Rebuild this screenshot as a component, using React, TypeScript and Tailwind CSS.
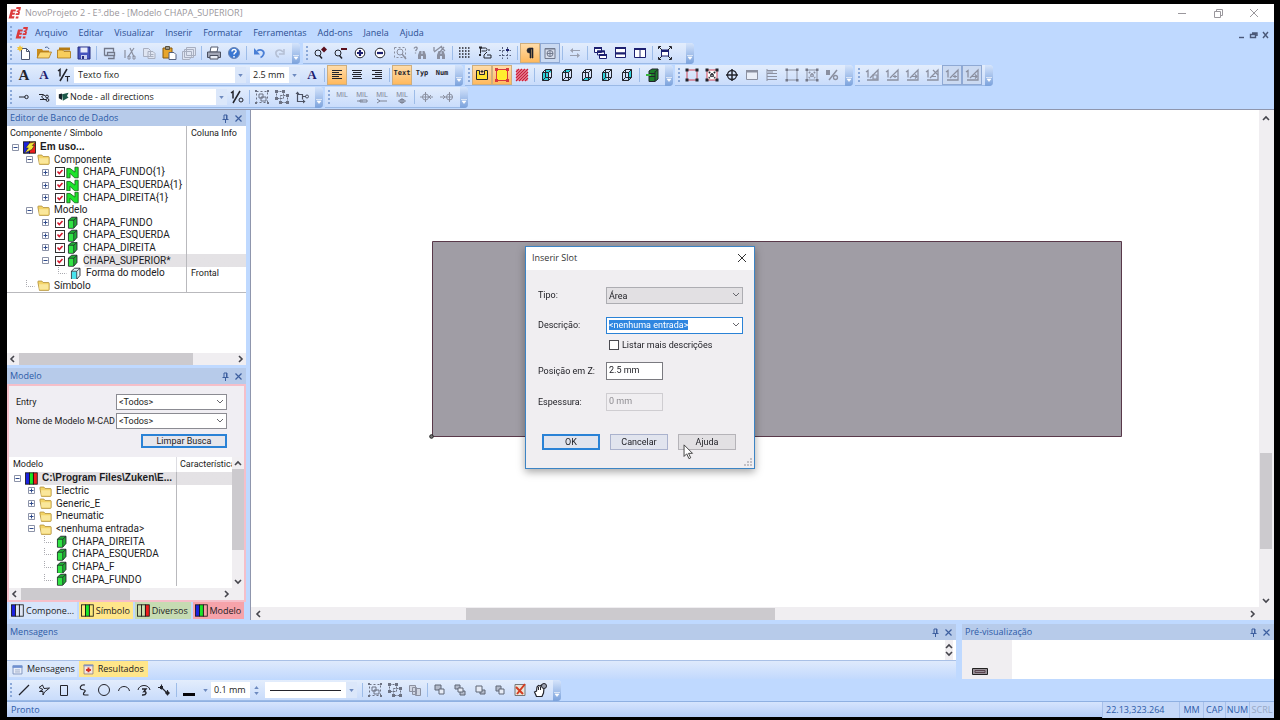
import { useEffect, useRef } from "react";
import type { ReactNode } from "react";

const G = "#8b90a0";
const K = "#23242c";
const N = "#1d2070";

const cube = (front: string, side: string) => (
  <>
    <path d="M3 5l4-3.500h6.500v9l-4 4.500H3z" fill={side} stroke={K} strokeWidth="1.100" />
    <path d="M3.500 5.500h6v9h-6z" fill={front} />
    <path d="M3 5.200h6.500v9.500M9.500 5.200l4-3.500" stroke={K} strokeWidth=".9" />
  </>
);

const wire = (face: string) => (
  <>
    <path d={face} fill="#2fd3dc" />
    <path d="M3.500 5.500h6v8h-6zM6.500 2.500h6v8h-6zM3.500 5.500l3-3M9.500 5.500l3-3M3.500 13.500l3-3M9.500 13.500l3-3" stroke={K} fill="none" />
  </>
);

const corners = (c: string) => (
  <path d="M1 1h3v3H1zM12 1h3v3h-3zM1 12h3v3H1zM12 12h3v3h-3z" fill={c} />
);

const ratio = (extra: string) => (
  <>
    <path d="M2 5l2-1.500v7M6 11l8-8v10H3" stroke={G} strokeWidth="1.300" fill="none" />
    <path d={extra} stroke={G} strokeWidth="1.200" fill="none" />
  </>
);

const layers = (a: string, b: string) => (
  <>
    <path d={a} fill="#b3bac9" stroke="#5f6676" />
    <path d={b} fill="#e6ebf5" stroke="#5f6676" />
  </>
);

const group = (c: string) => (
  <>
    <path d="M2.500 2.500h11v11h-11z" stroke={c} strokeDasharray="2 2" fill="none" />
    <path d="M5 5h4v4H5zM7 8h5v4H7z" stroke={c} fill="none" />
    <path d="M1 1h2v2H1zM13 1h2v2h-2zM1 13h2v2H1zM13 13h2v2h-2z" fill={c} />
  </>
);

const ungroup = (c: string) => (
  <>
    <path d="M2.500 2.500h7v7h-7zM6.500 6.500h7v7h-7z" stroke={c} strokeDasharray="2 1" fill="none" />
    <path d="M1 1h3v3H1zM8 1h3v3H8zM1 8h3v3H1zM12 5h3v3h-3zM5 12h3v3H5zM12 12h3v3h-3z" fill={c} />
  </>
);

const bars = (colors: [string, string, string]) => (
  <>
    {colors.map((c, i) => (
      <rect key={i} x={0.7 + i * 4.8} y="1" width="4.800" height="14" fill={c} stroke="#111" />
    ))}
  </>
);

const icons: Record<string, ReactNode> = {
  logo: (
    <>
      <path d="M4 4.500h5l-.6 2H6l-.3 1.300h2.400l-.6 2H5.200l-.3 1.400h2.600l-.6 2.300H1.600z" fill="#dc3a3c" />
      <path d="M9.500 2H14l-.6 3.200-1.200.9.8 1-.8 2.900H8.500l.4-1.700h1.900l.3-1.200H9.600l.3-1.500h1.400l.3-1.500H9.100zM9 11.500h2.600l-.4 2H8.600z" fill="#dc3a3c" />
    </>
  ),
  new: (
    <>
      <path d="M5.500 3.500h5l3 3v8h-8z" fill="#fff" stroke="#4a5570" />
      <path d="M10.500 3.500v3h3" stroke="#4a5570" fill="none" />
      <path d="M4 0l1 2 2-.5-1 2 1 1.500-2 0-1 2-1-2-2 0 1-1.500L1 2l2 0z" fill="#f2c43a" />
    </>
  ),
  open: (
    <>
      <path d="M1 4h5l1 1.500h6V13H1z" fill="#c98c1c" />
      <path d="M4 7h11.500L13 13H1z" fill="#fbd874" stroke="#a56d10" strokeWidth=".7" />
      <path d="M9 2.500c2-1 3.500 0 4 1.500" stroke="#47608f" fill="none" />
    </>
  ),
  folder2: (
    <>
      <path d="M3 2.500h11v3H3z" fill="#b67c14" />
      <path d="M1.500 5h5l1.500 1.500h6.500V13h-13z" fill="#f8cd5c" stroke="#a9740f" strokeWidth=".8" />
    </>
  ),
  save: (
    <>
      <path d="M2 2h12v12H2z" fill="#4553bd" stroke="#272f80" />
      <path d="M4.500 2.500h7v5h-7z" fill="#e8ecfb" />
      <path d="M5 10h6v4H5z" fill="#c9cfee" />
      <path d="M6 11h2v3H6z" fill="#272f80" />
    </>
  ),
  plug: (
    <path d="M3.500 10.500v-7h9v3M6.500 7.500h7v3h-7zM3.500 10.500h3M7 13.500h6v-3" stroke="#727889" strokeWidth="1.300" fill="none" />
  ),
  cut: (
    <>
      <path d="M4 5v8M7 12l6-9M9 3l4 9" stroke={G} strokeWidth="1.200" />
      <path d="M7 11h2v3H7zM12 11h2v3h-2z" fill="none" stroke={G} />
    </>
  ),
  copy: <path d="M2.500 3.500h5l2 2v6h-7zM7 6.500h5l2 2v5H7zM8.500 9.500h4M8.500 11.500h4" fill="#dfe5f2" stroke="#a8afc0" />,
  paste: (
    <>
      <path d="M2 3h9v10H2z" fill="#e7a52b" stroke="#87590c" />
      <path d="M4.500 1.500h4v3h-4z" fill="#9a968a" stroke="#59523f" />
      <path d="M8 7.500h5l2 2v5H8z" fill="#fff" stroke="#54617f" />
    </>
  ),
  copies: <path d="M5.500 2.500h9v8h-9zM3.500 4.500h9v8h-9zM1.500 6.500h9v5l-2 3h-7z" fill="#dfe5f2" stroke="#a8afc0" />,
  print: (
    <>
      <path d="M5 2h7l-1 5H4z" fill="#fff" stroke="#555c70" />
      <path d="M1.500 7h13v5.500h-13z" fill="#a2a7b7" stroke="#4a5060" />
      <path d="M4 10.500h8V14H4z" fill="#e9edf6" stroke="#4a5060" />
    </>
  ),
  help: (
    <>
      <circle cx="8" cy="8" r="5.500" fill="#3a77d2" stroke="#6b86b4" />
      <path d="M6 6.500c0-3 4.500-2.500 4 0-.3 1.300-2 1.300-2 3M8 11v1.500" stroke="#fff" strokeWidth="1.500" fill="none" />
    </>
  ),
  undo: (
    <>
      <path d="M6 6c4-2.500 8 0 6.500 3.500-.6 1.500-1.500 2.500-3 3" stroke="#4a7fd6" strokeWidth="1.800" fill="none" />
      <path d="M3 3v6.500h6z" fill="#4a7fd6" />
    </>
  ),
  redo: <path d="M12 7c-3-4-8-1.500-7 2 .5 2 2 3 3 3M13 4v5H8" stroke="#b4bfd4" strokeWidth="1.500" fill="none" />,
  zoomin: (
    <>
      <circle cx="6" cy="8" r="3" stroke={K} fill="none" />
      <path d="M7.500 10.500L10 13.500" stroke={K} strokeWidth="1.500" />
      <path d="M12 1.500l3 3-3 3-3-3z" fill="#5b0f1c" />
    </>
  ),
  zoomout: (
    <>
      <circle cx="6" cy="8" r="3" stroke={K} fill="none" />
      <path d="M7.500 10.500L10 13.500" stroke={K} strokeWidth="1.500" />
      <path d="M9 3h6v2H9z" fill="#5b0f1c" />
    </>
  ),
  cplus: (
    <>
      <circle cx="8" cy="8" r="4.800" stroke={K} fill="#fff" />
      <path d="M8 5v6M5 8h6" stroke={N} strokeWidth="2.200" />
    </>
  ),
  cminus: (
    <>
      <circle cx="8" cy="8" r="4.800" stroke={K} fill="#fff" />
      <path d="M5 8h6" stroke={N} strokeWidth="2.200" />
    </>
  ),
  zoomsel: (
    <>
      <path d="M2.500 2.500h11v10h-11z" stroke={G} strokeDasharray="2 2" fill="none" />
      <circle cx="8" cy="7" r="3" stroke={G} fill="none" />
      <path d="M10 9l4 5" stroke={G} strokeWidth="1.500" />
    </>
  ),
  find: (
    <>
      <path d="M2 3.500c1-2 4-1.500 3 .5l-1.500 2M3.500 7.500v1" stroke={G} strokeWidth="1.300" fill="none" />
      <path d="M6 10l1.500-4h2v3h1V6h2l1.500 4v4h-3v-3H9v3H6z" fill={G} />
    </>
  ),
  findp: (
    <>
      <path d="M2 7l8-6M2 2v4M9 2l4 4M12 2L8 7" stroke={G} strokeWidth="1.300" />
      <path d="M5 10l1.500-4h2v3h1V6h2l1.500 4v4h-3v-3H8v3H5z" fill={G} />
    </>
  ),
  grid: (
    <path d="M2 3h12M2 6h12M2 9h12M2 12h12" stroke={K} strokeWidth="1.500" strokeDasharray="1.500 1.500" />
  ),
  pshape: (
    <>
      <path d="M3.500 2.500v6M3.500 3h5c2 0 2 3 0 3h-4M12 4v2" stroke={K} fill="none" />
      <path d="M10 7l-3 3v3h7v-3h-4" stroke={K} fill="none" />
      <path d="M2 1.500h3v2H2zM2 9h2v2H2z" fill={K} />
    </>
  ),
  cross: (
    <>
      <path d="M5.500 2v12M10.500 2v12" stroke="#56607c" strokeDasharray="2 1.500" />
      <path d="M2 5.500h12M2 10.500h12" stroke="#56607c" strokeDasharray="2 1.500" />
      <path d="M9 4h3v2H9z" fill={N} />
    </>
  ),
  pilcrow: <path d="M11 3H7.500a2.500 2.500 0 000 5H8v5h1V4h1v9h1z" fill={K} stroke={K} strokeWidth=".6" />,
  globe: (
    <>
      <path d="M3 3.500h10v10H3z" stroke="#727a8e" fill="#d6dceb" />
      <circle cx="8" cy="8.500" r="3" stroke="#727a8e" fill="none" />
      <path d="M5 8.500h6M8 5.500v6M3 4h10" stroke="#727a8e" />
    </>
  ),
  swap: (
    <>
      <path d="M4 5.500h9M3 10.500h8" stroke="#9aa0b0" />
      <path d="M6 3v5L3 5.500zM10 8v5l3-2.500z" fill="#9aa0b0" />
    </>
  ),
  cascade: (
    <>
      <path d="M2.500 2.500h7v5h-7zM5.500 6h7v4h-7zM7.500 9.500h7v4h-7z" fill="#fff" stroke={N} />
      <path d="M2 2h8v2H2zM5 5.500h8v2H5zM7 9h8v2H7z" fill={N} />
    </>
  ),
  tileh: (
    <>
      <path d="M3.500 2.500h10v10h-10zM3.500 8h10" fill="#fff" stroke={N} />
      <path d="M3 2h11v2H3zM3 7.500h11v2H3z" fill={N} />
    </>
  ),
  tilev: (
    <>
      <path d="M2.500 3.500h11v9h-11zM8 4v9" fill="#fff" stroke={N} />
      <path d="M2 3h12v2H2z" fill={N} />
    </>
  ),
  fit: (
    <>
      <path d="M4.500 5h7v6h-7z" fill="#fff" stroke={N} />
      <path d="M4 5h8v2H4z" fill={N} />
      <path d="M2 2l3 3M14 2l-3 3M2 14l3-3M14 14l-3-3" stroke={K} />
      <path d="M1.500 4V1.500H4M12 1.500h2.500V4M1.500 12v2.500H4M12 14.500h2.500V12" stroke={K} fill="none" />
    </>
  ),
  oneT: (
    <>
      <path d="M2 4l2-1.500v7M11 2L4 14" stroke={K} strokeWidth="1.500" fill="none" />
      <path d="M9 9.500h5M11.500 9.500v5" stroke={K} strokeWidth="1.200" />
    </>
  ),
  onePin: (
    <>
      <path d="M2 4l2-1.500v7M11 2L4 14" stroke={K} strokeWidth="1.500" fill="none" />
      <circle cx="12" cy="11" r="2" stroke={K} fill="none" />
    </>
  ),
  left: <path d="M3 3.500h10M3 5.500h7M3 7.500h10M3 9.500h7M3 11.500h10" stroke={K} shapeRendering="crispEdges" />,
  center: <path d="M3 3.500h10M4 5.500h8M3 7.500h10M4 9.500h8M3 11.500h10" stroke={K} shapeRendering="crispEdges" />,
  right: <path d="M3 3.500h10M6 5.500h7M3 7.500h10M6 9.500h7M3 11.500h10" stroke={K} shapeRendering="crispEdges" />,
  slot: (
    <>
      <path d="M2.500 3.500h3v4h5v-4h3v9h-11z" fill="#ffe22e" stroke={K} />
      <path d="M8 3v3M6.500 4.500h3" fill="none" stroke={K} />
    </>
  ),
  yarea: (
    <>
      <path d="M2.500 2.500h11v11h-11z" fill="#ffee2e" stroke="#d9383a" />
      {corners("#d9383a")}
    </>
  ),
  hatch: (
    <>
      <path d="M2 2h12v12H2z" fill="#f3a9b4" />
      <path d="M2 5l3-3M2 8l6-6M2 11l9-9M2 14L14 2M5 14l9-9M8 14l6-6M11 14l3-3" stroke="#c61d3c" strokeWidth="1.200" />
    </>
  ),
  w1: wire("M3.500 5.500h6v8h-6zM6.500 2.500h6v3h-6z"),
  w2: wire("M3.500 5.500l3-3h6l-3 3z"),
  w3: wire("M3.500 13.500l3-3h6l-3 3z"),
  w4: wire("M3.500 5.500h4v8h-4z"),
  w5: wire("M9.500 5.500l3-3v8l-3 3z"),
  book: (
    <>
      <path d="M5 4l3-2h6v10l-3 2.500H5z" fill="#1d7d2a" stroke={K} />
      <path d="M5 6.500h6M5 9.500h6M11 4.500v9.500M11 5l3-2.500" stroke={K} />
      <path d="M2 8h5" stroke="#38b43e" strokeWidth="2" />
    </>
  ),
  rsq: (
    <>
      <path d="M3 3h10v10H3z" stroke="#d44656" fill="none" />
      <path d="M1.500 1.500h3v3h-3zM11.500 1.500h3v3h-3zM1.500 11.500h3v3h-3zM11.500 11.500h3v3h-3z" fill={K} />
    </>
  ),
  rsqx: (
    <>
      <path d="M3 3h10v10H3z" stroke="#d44656" fill="#fff" />
      <path d="M5 5l6 6M11 5l-6 6" stroke={K} strokeWidth="2" strokeDasharray="1.500 1" />
      <path d="M1.500 1.500h3v3h-3zM11.500 1.500h3v3h-3zM1.500 11.500h3v3h-3zM11.500 11.500h3v3h-3z" fill={K} />
    </>
  ),
  target: (
    <>
      <circle cx="8" cy="8" r="4.500" stroke={K} fill="none" strokeWidth="1.300" />
      <path d="M8 2v12M2 8h12" stroke={K} strokeWidth="1.500" />
    </>
  ),
  win: (
    <>
      <path d="M2.500 3.500h11v9h-11z" stroke={G} fill="#e9eef8" />
      <path d="M2 3h12v2.500H2z" fill={G} />
    </>
  ),
  rows: <path d="M3 2v12M3 3.500h10M3 6.500h10M3 9.500h10M3 12.500h10M4 5h5" stroke={G} />,
  gsq: (
    <>
      <path d="M3 3h10v10H3z" stroke={G} fill="none" />
      <path d="M1.500 1.500h2.500v2.500h-2.500zM12 1.500h2.500v2.500H12zM1.500 12h2.500v2.500h-2.500zM12 12h2.500v2.500H12z" fill="#747989" />
    </>
  ),
  gsqx: (
    <>
      <path d="M3 3h10v10H3z" stroke={G} fill="none" />
      <path d="M5 5l6 6M11 5l-6 6" stroke={G} strokeWidth="2" strokeDasharray="1.500 1" />
      <path d="M1.500 1.500h2.500v2.500h-2.500zM12 1.500h2.500v2.500H12zM1.500 12h2.500v2.500h-2.500zM12 12h2.500v2.500H12z" fill="#747989" />
    </>
  ),
  pct: (
    <>
      <path d="M13 3L5 13" stroke={G} strokeWidth="1.500" />
      <path d="M2 3h4v5H2z" fill={G} />
      <circle cx="11.500" cy="10.500" r="2" stroke={G} fill="none" strokeWidth="1.300" />
    </>
  ),
  r1: ratio("M9 8h4v4H9z"),
  r2: ratio("M9 9.500h4M11 8v3"),
  r3: ratio("M8 9.500h5M11 7.500l2 2-2 2"),
  r4: ratio("M9 3l5 5M8 9.500h4"),
  node: (
    <>
      <path d="M3 8h6" stroke={K} />
      <circle cx="10.500" cy="8" r="1.700" stroke={K} fill="none" />
    </>
  ),
  nodes: (
    <>
      <path d="M3 5.500h4l2.500 1.500M4 10.500h6M7.500 6L5.500 8l3 2.500" stroke={K} fill="none" />
      <circle cx="11" cy="7.500" r="1.400" stroke={K} fill="none" />
      <circle cx="11.500" cy="11" r="1.400" stroke={K} fill="none" />
    </>
  ),
  nodeflag: (
    <>
      <path d="M1 4l4-1v8l-4-2z" fill="#17242b" />
      <path d="M5 4l8-2-2 4 2 2-7 4z" fill="#1d5a4a" />
    </>
  ),
  group: group("#6c7283"),
  ungroup: ungroup("#6c7283"),
  net: (
    <>
      <path d="M3.500 4v8.500h6M3.500 5.500h5v5M8 7.500h4" stroke="#4c5262" strokeWidth="1.200" fill="none" />
      <circle cx="13" cy="7.500" r="1.500" stroke="#4c5262" fill="none" />
      <path d="M1.500 5l2-2.500 2 2.500zM9 10.500l2.500 2-2.500 2z" fill="#4c5262" />
    </>
  ),
  pinl: (
    <>
      <circle cx="6.500" cy="8" r="3" stroke={G} fill="none" />
      <path d="M1 8h13M6.500 3v10M12 6l-2 2 2 2" stroke={G} fill="none" />
    </>
  ),
  pinr: (
    <>
      <circle cx="10.500" cy="8" r="3" stroke={G} fill="none" />
      <path d="M1 8h13M10.500 3v10M4 6l2 2-2 2" stroke={G} fill="none" />
    </>
  ),
  line: <path d="M3 13L13 3" stroke={K} strokeWidth="1.300" />,
  poly: <path d="M6.500 3l1.500 3.500 5.500-.5-5 4-1.500 3v-3.500H3.500L7 7.500 3 5.500z" stroke={K} fill="none" />,
  rect: <path d="M4.500 3.500h7v10h-7z" stroke={K} fill="none" />,
  curve: <path d="M9 3C4 2 3 7 6 7.500s4 1 2.500 2.500-1.500 3 .5 3h3.500" stroke={K} strokeWidth="1.200" fill="none" />,
  circle: <circle cx="8" cy="8" r="5.500" stroke={K} fill="none" />,
  arc: <path d="M2.500 9c1-6 10-6 11 0" stroke={K} fill="none" />,
  arc3: (
    <>
      <path d="M2 8c1-6 11-6 12 0" stroke={K} fill="none" />
      <path d="M6 7h4L8 9.500c3-.5 3 4-2 3.500" stroke={K} strokeWidth="1.400" fill="none" />
    </>
  ),
  conn: (
    <>
      <path d="M5 5l6 6M2 5.500h5M5.500 2.500v5M9 11h5M11.500 8v5.500" stroke={K} strokeWidth="1.100" />
      <path d="M4 4h3v3H4zM10 9.500h3v3h-3z" fill={K} />
    </>
  ),
  pen: <path d="M2 11h12v3H2z" fill="#05050a" />,
  combine: <path d="M2.500 3.500h6v6h-6zM5.500 5.500h4v7h-4zM8.500 6.500h5v7h-5z" stroke={G} fill="#cfd5e2" />,
  l1: layers("M3 3h6v5H3z", "M7 7h5v5H7z"),
  l2: layers("M3 3h5v4H3zM8 9h5v4H8z", "M6 6h5v4H6z"),
  l3: layers("M8 8h5v4H8z", "M4 4h6v6H4z"),
  l4: layers("M4 4h5v5H4z", "M7 7h5v5H7z"),
  del: (
    <>
      <path d="M3 2.500h10v11H3z" fill="#e9e4da" stroke="#777" />
      <path d="M4 5l7 7M13 2L5 12" stroke="#d43c20" strokeWidth="2" />
    </>
  ),
  hand: (
    <>
      <path d="M4.500 14.500L2.500 10l2-1 .5-4 1.500-1.500 1.500.5L9.500 3l1.500 1.500 1 1.500-.5 5-1.500 3.500z" fill="#fff" stroke={K} strokeWidth="1.200" />
      <path d="M6.500 5v3M8.500 4.500V8" stroke={K} />
      <circle cx="12" cy="4" r="2.500" fill="#9aa0b0" stroke={K} />
    </>
  ),
  project: (
    <>
      <rect x=".7" y="1" width="7.300" height="14" fill="#1c22d8" stroke="#111" />
      <rect x="8" y="1" width="7.300" height="14" fill="#ee1d1d" stroke="#111" />
      <path d="M15.500 1L8 2.500 3.500 8.500h3L2 15l9-4.500L14 5.500h-2.500z" fill="#f2e33a" stroke="#222" strokeWidth=".7" />
    </>
  ),
  bCat: bars(["#1c22e0", "#19e629", "#ee1d1d"]),
  bComp: bars(["#1c22e0", "#dfe6f5", "#dfe6f5"]),
  bSym: bars(["#fbe77a", "#19e629", "#fbe77a"]),
  bDiv: bars(["#c9dcae", "#c9dcae", "#ee1d1d"]),
  bMod: bars(["#1c22e0", "#19e629", "#f4a3a6"]),
  folder: (
    <>
      <path d="M1 3.500q0-1 1-1h4l1.500 1.800h6.500q1 0 1 1V13q0 1-1 1H3z" fill="#f3d367" stroke="#a98730" strokeWidth=".9" />
      <path d="M2.500 6.500h11.500v6.500H3z" fill="#fae79b" />
    </>
  ),
  comp: <path d="M1 3v11.500h4V9l5.500 5.500H15V1.500h-4V7.500L5 3z" fill="#1de32c" stroke="#145c18" />,
  model: cube("#31e444", "#1fae33"),
  form: cube("#48e4ee", "#dff4f6"),
  msgs: (
    <>
      <path d="M2.500 3.500h11v10h-11z" fill="#e9eef9" stroke="#7087b5" />
      <path d="M2 3h12v3H2z" fill="#6d8fd0" />
      <path d="M5 8.500h6M5 11h6" stroke="#8fa0bf" />
    </>
  ),
  results: (
    <>
      <path d="M2.500 2.500h11v11h-11z" fill="#f3e6e0" stroke="#8f7f78" />
      <path d="M2 2h12v2H2z" fill="#7f93c4" />
      <path d="M8 5.500v6M5 8.500h6" stroke="#d32f22" strokeWidth="2.400" />
    </>
  ),
};

function Icon({ name, size = "md" }: { name: string; size?: "sm" | "md" }) {
  return (
    <svg viewBox="0 0 16 16" fill="none" aria-hidden="true" className={size === "md" ? "size-4 shrink-0" : "size-[13px] shrink-0"}>
      {icons[name]}
    </svg>
  );
}

type Item = [string, string, ("on" | "off")?];

function Tool({ item: [name, label, state] }: { item: Item }) {
  const look =
    state === "on"
      ? "border-[#cfae7d] bg-linear-to-b from-[#ffdca8] to-[#ffb95c]"
      : state === "off"
        ? "border-[#8fa9d4] bg-[#cbdaf2]"
        : "border-transparent";
  return (
    <button type="button" title={label} aria-label={label} className={`flex h-5 w-5 shrink-0 items-center justify-center border ${look}`}>
      {icons[name] ? <Icon name={name} /> : <span className="pb-1 font-['DejaVu_Sans_Mono'] text-[7px] leading-3 font-bold text-[#23242c]">{name}</span>}
    </button>
  );
}

function Tools({ items }: { items: Item[] }) {
  return (
    <>
      {items.map((item, i) => (
        <Tool key={i} item={item} />
      ))}
    </>
  );
}

const Sep = () => <span className="mx-0.5 h-3.5 w-px shrink-0 bg-[#9dbce8]" />;

function FontTool({ label, className }: { label: string; className: string }) {
  return (
    <button type="button" aria-label={label} className={`flex h-5 w-5 shrink-0 items-center justify-center font-['Liberation_Serif'] font-bold ${className}`}>
      A
    </button>
  );
}

function Mil({ label, d }: { label: string; d: string }) {
  return (
    <button type="button" aria-label={label} className="flex h-5 w-5 shrink-0 flex-col items-center justify-center text-[#7f8596]">
      <span className="font-['Liberation_Sans'] text-[7px] leading-[7px]">MIL</span>
      <svg viewBox="0 0 12 6" className="h-1.5 w-3" fill="none" stroke="currentColor" aria-hidden="true">
        <path d={d} />
      </svg>
    </button>
  );
}

function Bar({ children }: { children: ReactNode }) {
  return (
    <div role="toolbar" className="flex h-[21px] items-center rounded-r-sm border-b border-[#9ab9e6] bg-linear-to-b from-[#e3edfc] to-[#c9dcfb]">
      <span className="mr-0.5 ml-[3px] h-3.5 w-px border-l-2 border-dotted border-[#8aa8d8]" />
      {children}
      <span className="ml-[3px] flex h-[21px] w-2 items-end justify-center self-start rounded-r-sm bg-linear-to-b from-[#d5e4fb] to-[#7ba2dc] pb-1">
        <svg viewBox="0 0 6 5" className="h-[5px] w-1.5" aria-hidden="true">
          <path d="M0 .5h6M1 2h4L3 4.500z" fill="#fff" stroke="#fff" strokeWidth=".6" />
        </svg>
      </span>
    </div>
  );
}

function ToolSelect({ label, value, width, indent = "pl-1" }: { label: string; value: string; width: string; indent?: string }) {
  return (
    <span className={`grid h-4 shrink-0 items-center bg-white ${width}`}>
      <select aria-label={label} className={`col-start-1 row-start-1 h-4 w-full appearance-none bg-transparent text-[9px] leading-4 font-medium ${indent}`}>
        <option>{value}</option>
      </select>
      <span className="pointer-events-none col-start-1 row-start-1 flex h-4 w-[11px] items-center justify-center justify-self-end bg-[#dbe7fa]">
        <Tri />
      </span>
    </span>
  );
}

const Tri = () => (
  <svg viewBox="0 0 6 4" className="h-[3px] w-[5px] shrink-0" aria-hidden="true">
    <path d="M0 0h6L3 4z" fill="#6d8abf" />
  </svg>
);

const chevrons = { up: "M1 6l3-3 3 3", down: "M1 2l3 3 3-3", left: "M5 1L2 4l3 3", right: "M3 1l3 3-3 3" };

function Arrow({ dir, label }: { dir: keyof typeof chevrons; label: string }) {
  return (
    <button type="button" aria-label={label} className="flex size-3 shrink-0 items-center justify-center">
      <svg viewBox="0 0 8 8" className="size-2" fill="none" stroke="#45454c" strokeWidth="1.600" aria-hidden="true">
        <path d={chevrons[dir]} />
      </svg>
    </button>
  );
}

function PanelHeader({ title }: { title: string }) {
  return (
    <header className="flex h-4 shrink-0 items-center bg-[#b7cbea] pr-0.5 pl-[3px] text-[#2d5ba8]">
      <h2 className="flex-1 text-[9px] leading-4 font-medium">{title}</h2>
      <button type="button" aria-label={`Fixar ${title}`} className="flex w-3.5 justify-center">
        <svg viewBox="0 0 9 9" className="size-[9px]" fill="none" stroke="#3d5f9f" aria-hidden="true">
          <path d="M3 1h3v4.500H3zM5.500 1v4.500M1.500 5.500h6M4.500 5.500V9" />
        </svg>
      </button>
      <button type="button" aria-label={`Fechar ${title}`} className="flex w-3 justify-center">
        <svg viewBox="0 0 9 9" className="size-[9px]" fill="none" stroke="#3d5f9f" strokeWidth="1.200" aria-hidden="true">
          <path d="M1.500 1.500l6 6M7.500 1.500l-6 6" />
        </svg>
      </button>
    </header>
  );
}

const ui = "font-['Roboto',sans-serif] font-normal";

function Expander({ state }: { state?: "plus" | "minus" }) {
  return (
    <span className="flex w-4 shrink-0 items-center justify-center">
      {state ? (
        <svg viewBox="0 0 9 9" className="size-[9px]" fill="#fff" stroke="#8c93a8" aria-hidden="true">
          <path d="M1.500 1.500h6v6h-6z" />
          <path d={state === "plus" ? "M2.500 4.500h4M4.500 2.500v4" : "M2.500 4.500h4"} stroke="#2f4a8c" />
        </svg>
      ) : (
        <svg viewBox="0 0 12 12" className="size-3" fill="none" stroke="#a8a8ae" strokeDasharray="1 1" aria-hidden="true">
          <path d="M3.500 0v6.500h8" />
        </svg>
      )}
    </span>
  );
}

type Row = {
  text: string;
  indent: string;
  icon: string;
  state?: "plus" | "minus";
  check?: boolean;
  bold?: boolean;
  selected?: "item" | "row";
  info?: string;
};

function TreeRow({ row, split }: { row: Row; split: string }) {
  const fill = row.selected === "item" ? "bg-linear-to-r from-white from-32% to-[#e4e2e5] to-33%" : row.selected === "row" ? "bg-linear-to-r from-white from-12% to-[#e4e2e5] to-13%" : "";
  return (
    <div role="treeitem" aria-selected={!!row.selected} className={`flex min-h-0 items-stretch overflow-hidden ${fill}`}>
      <div className={`flex shrink-0 items-center overflow-hidden border-r border-[#b9b9bd] ${split} ${row.indent}`}>
        <Expander state={row.state} />
        {row.check && (
          <span className="mr-px ml-0.5 grid size-2.5 shrink-0 place-items-center">
            <input type="checkbox" defaultChecked aria-label={row.text} className="col-start-1 row-start-1 size-2.5 appearance-none border border-[#333] bg-white" />
            <svg viewBox="0 0 8 8" className="pointer-events-none col-start-1 row-start-1 size-2" fill="none" stroke="#d3182c" strokeWidth="1.600" aria-hidden="true">
              <path d="M1.500 3.500l1.800 2L6.500 2" />
            </svg>
          </span>
        )}
        <Icon name={row.icon} size="sm" />
        <span className={`leading-3 whitespace-nowrap ${row.bold ? "pl-1 font-['Liberation_Sans'] text-[10px] font-bold" : "pl-1 text-[10px]"}`}>{row.text}</span>
      </div>
      {row.info && <span className="self-center pl-1 text-[9px] leading-3">{row.info}</span>}
    </div>
  );
}

const database: Row[] = [
  { text: "Em uso...", indent: "pl-0", icon: "project", state: "minus", bold: true },
  { text: "Componente", indent: "pl-3.5", icon: "folder", state: "minus" },
  { text: "CHAPA_FUNDO{1}", indent: "pl-[30px]", icon: "comp", state: "plus", check: true },
  { text: "CHAPA_ESQUERDA{1}", indent: "pl-[30px]", icon: "comp", state: "plus", check: true },
  { text: "CHAPA_DIREITA{1}", indent: "pl-[30px]", icon: "comp", state: "plus", check: true },
  { text: "Modelo", indent: "pl-3.5", icon: "folder", state: "minus" },
  { text: "CHAPA_FUNDO", indent: "pl-[30px]", icon: "model", state: "plus", check: true },
  { text: "CHAPA_ESQUERDA", indent: "pl-[30px]", icon: "model", state: "plus", check: true },
  { text: "CHAPA_DIREITA", indent: "pl-[30px]", icon: "model", state: "plus", check: true },
  { text: "CHAPA_SUPERIOR*", indent: "pl-[30px]", icon: "model", state: "minus", check: true, selected: "item" },
  { text: "Forma do modelo", indent: "pl-[46px]", icon: "form", info: "Frontal" },
  { text: "Símbolo", indent: "pl-3.5", icon: "folder" },
];

const library: Row[] = [
  { text: "C:\\Program Files\\Zuken\\E...", indent: "pl-0", icon: "bCat", state: "minus", bold: true, selected: "row" },
  { text: "Electric", indent: "pl-3.5", icon: "folder", state: "plus" },
  { text: "Generic_E", indent: "pl-3.5", icon: "folder", state: "plus" },
  { text: "Pneumatic", indent: "pl-3.5", icon: "folder", state: "plus" },
  { text: "<nenhuma entrada>", indent: "pl-3.5", icon: "folder", state: "minus" },
  { text: "CHAPA_DIREITA", indent: "pl-[30px]", icon: "model" },
  { text: "CHAPA_ESQUERDA", indent: "pl-[30px]", icon: "model" },
  { text: "CHAPA_F", indent: "pl-[30px]", icon: "model" },
  { text: "CHAPA_FUNDO", indent: "pl-[30px]", icon: "model" },
];

function Chevron() {
  return (
    <svg viewBox="0 0 8 6" className="pointer-events-none col-start-1 row-start-1 mr-[3px] h-1.5 w-2 justify-self-end" fill="none" stroke="#66666c" aria-hidden="true">
      <path d="M1 1l3 3 3-3" />
    </svg>
  );
}

function Filter({ id, label }: { id: string; label: string }) {
  return (
    <div className="flex items-center justify-between">
      <label htmlFor={id} className="text-[9px] leading-4 whitespace-nowrap">{label}</label>
      <span className="grid w-[111px] shrink-0 items-center">
        <select id={id} className="col-start-1 row-start-1 h-4 w-full appearance-none border border-[#8b8b92] bg-white pl-0.5 text-[9px] leading-3">
          <option>{"<Todos>"}</option>
        </select>
        <Chevron />
      </span>
    </div>
  );
}

const menu = ["Arquivo", "Editar", "Visualizar", "Inserir", "Formatar", "Ferramentas", "Add-ons", "Janela", "Ajuda"];

const panelTabs = [
  { icon: "bComp", text: "Compone...", look: "bg-[#d6e5fb]" },
  { icon: "bSym", text: "Símbolo", look: "bg-[#ffe68a]" },
  { icon: "bDiv", text: "Diversos", look: "bg-[#c6dbb2]" },
  { icon: "bMod", text: "Modelo", look: "bg-[#f6a3aa]" },
];

function SlotDialog() {
  const entry = useRef<HTMLInputElement>(null);
  useEffect(() => {
    entry.current?.focus();
    entry.current?.select();
  }, []);
  return (
    <div className="pointer-events-none fixed inset-0 flex items-center justify-center pb-1.5">
      <form role="dialog" aria-label="Inserir Slot" className={`pointer-events-auto relative flex w-[230px] flex-col border border-[#3c84c4] bg-[#f0eef1] text-[9px] leading-4 shadow-[0_3px_8px_rgba(0,0,0,0.35)] ${ui}`}>
        <div className="flex h-[23px] items-center justify-between bg-white pr-[7px] pl-1.5 font-['Open_Sans'] text-[#333]">
          <span>Inserir Slot</span>
          <button type="button" aria-label="Fechar">
            <svg viewBox="0 0 10 10" className="size-2.5" fill="none" stroke="#333" aria-hidden="true">
              <path d="M1 1l8 8M9 1L1 9" />
            </svg>
          </button>
        </div>
        <div className="grid grid-cols-[68px_1fr] items-center pt-[17px] pr-[11px] pl-3">
          <label htmlFor="tipo">Tipo:</label>
          <span className="grid items-center">
            <select id="tipo" className="col-start-1 row-start-1 h-[17px] w-full appearance-none border border-[#adadb2] bg-[#e2e0e3] pl-0.5">
              <option>Área</option>
            </select>
            <Chevron />
          </span>
          <label htmlFor="descricao" className="mt-[13px]">Descrição:</label>
          <span className="mt-[13px] grid items-center">
            <input ref={entry} id="descricao" defaultValue="<nenhuma entrada>" className="col-start-1 row-start-1 h-[17px] w-full border border-[#2a82d6] bg-white pl-0.5 caret-transparent outline-none selection:bg-[#2f86e0] selection:text-white" />
            <Chevron />
          </span>
          <span />
          <label className="mt-px flex h-5 items-center gap-[3px] pl-[3px]">
            <input type="checkbox" className="size-2.5 appearance-none border border-[#4a4a50] bg-white" />
            Listar mais descrições
          </label>
          <label htmlFor="posicao" className="mt-[7px]">Posição em Z:</label>
          <input id="posicao" defaultValue="2.5 mm" className="mt-[7px] h-[18px] w-[57px] border border-[#7a7a80] bg-white pb-px pl-0.5" />
          <label htmlFor="espessura" className="mt-[13px]">Espessura:</label>
          <input id="espessura" disabled defaultValue="0 mm" className="mt-[13px] h-[18px] w-[57px] border border-[#cfcdd1] bg-transparent pb-px pl-0.5 text-[#8f8d92]" />
        </div>
        <div className="mt-[23px] mb-[18px] flex gap-2.5 pl-4">
          <button type="submit" className="h-4 w-[58px] border-2 border-[#2a82d6] bg-[#e1e4ee] leading-3">OK</button>
          <button type="button" className="h-4 w-[58px] border border-[#aab2cd] bg-[#e1e4ee] leading-3">Cancelar</button>
          <button type="button" className="h-4 w-[58px] border border-[#b5b3b8] bg-[#e2e0e3] leading-3">Ajuda</button>
        </div>
        <svg viewBox="0 0 8 8" className="absolute right-0.5 bottom-0.5 size-2" fill="#c2c0c5" aria-hidden="true">
          <path d="M6 0h2v2H6zM3 3h2v2H3zM6 3h2v2H6zM0 6h2v2H0zM3 6h2v2H3zM6 6h2v2H6z" />
        </svg>
        <svg viewBox="0 0 12 18" className="absolute right-[60px] bottom-2 h-4 w-[11px]" aria-hidden="true">
          <path d="M1 1v13l3-3 2.500 5.500 2-1-2.500-5H10.500z" fill="#fff" stroke="#333" />
        </svg>
      </form>
    </div>
  );
}

export default function App() {
  return (
    <div className="flex h-screen flex-col overflow-hidden bg-black pt-1 pr-1.5 pb-[3px] pl-[7px] font-['Open_Sans',sans-serif] text-[9px] leading-4 font-medium text-[#1c1c22]">
      <div className="flex min-h-0 flex-1 flex-col bg-[#bfd9ff]">
        <header className="flex h-[18px] shrink-0 items-center gap-0.5 bg-white text-[#9a979c]">
          <Icon name="logo" />
          <h1 className="flex-1 text-[9px] leading-4 font-medium">
            NovoProjeto 2 - E<sup className="text-[6px]">3</sup>.dbe - [Modelo CHAPA_SUPERIOR]
          </h1>
          <div className="flex gap-[26px] pr-[15px]">
            {[
              ["Minimizar", "M1 5.500h8"],
              ["Restaurar", "M1.500 3.500h6v6h-6zM3.500 3V1.500h6v6H8"],
              ["Fechar", "M1 1l8 8M9 1L1 9"],
            ].map(([label, d]) => (
              <button key={label} type="button" aria-label={label}>
                <svg viewBox="0 0 10 10" className="size-2.5" fill="none" stroke="#9a979c" aria-hidden="true">
                  <path d={d} />
                </svg>
              </button>
            ))}
          </div>
        </header>
        <nav className="flex h-[21px] shrink-0 items-center text-[#2c4f93]">
          <span className="mr-0.5 ml-[3px] h-3.5 border-l-2 border-dotted border-[#8aa8d8]" />
          <Icon name="logo" />
          <div className="flex flex-1 gap-[11px] pl-[5px]">
            {menu.map((m) => (
              <button key={m} type="button">{m}</button>
            ))}
          </div>
          <div className="flex gap-[3px] self-end pr-1 pb-1">
            {[
              ["Minimizar documento", "M2 7.500h5"],
              ["Restaurar documento", "M1.500 4.500h5v3h-5zM3 3h5v3"],
              ["Fechar documento", "M2 2l5 6M7 2L2 8"],
            ].map(([label, d]) => (
              <button key={label} type="button" aria-label={label}>
                <svg viewBox="0 0 9 9" className="size-[9px]" fill="none" stroke="#4a5878" strokeWidth="1.400" aria-hidden="true">
                  <path d={d} />
                </svg>
              </button>
            ))}
          </div>
        </nav>
        <div className="flex h-[67px] shrink-0 flex-col gap-px border-b border-[#8f96ad]">
          <div className="flex gap-[3px]">
            <Bar>
              <Tools items={[["new", "Novo"], ["open", "Abrir"], ["folder2", "Abrir pasta"], ["save", "Salvar"]]} />
              <Sep />
              <Tools items={[["plug", "Conectar"], ["cut", "Recortar"], ["copy", "Copiar"], ["paste", "Colar"], ["copies", "Duplicar"]]} />
              <Sep />
              <Tools items={[["print", "Imprimir"], ["help", "Ajuda"]]} />
              <Sep />
              <Tools items={[["undo", "Desfazer"], ["redo", "Refazer"]]} />
            </Bar>
            <Bar>
              <Tools items={[["zoomin", "Mais zoom"], ["zoomout", "Menos zoom"], ["cplus", "Ampliar"], ["cminus", "Reduzir"], ["zoomsel", "Zoom na seleção"], ["find", "Localizar"], ["findp", "Localizar próximo"]]} />
              <Sep />
              <Tools items={[["grid", "Grade"], ["pshape", "Forma"], ["cross", "Guias"]]} />
              <Sep />
              <Tools items={[["pilcrow", "Marcas", "on"], ["globe", "Rede", "off"]]} />
              <Sep />
              <Tools items={[["swap", "Trocar"]]} />
              <Sep />
              <Tools items={[["cascade", "Em cascata"], ["tileh", "Lado a lado horizontal"], ["tilev", "Lado a lado vertical"]]} />
              <Sep />
              <Tools items={[["fit", "Ajustar"]]} />
              <span className="w-2" />
            </Bar>
          </div>
          <div className="flex gap-0.5">
            <Bar>
              <FontTool label="Fonte" className="text-[15px] text-[#23242c]" />
              <FontTool label="Cor da fonte" className="text-[13px] text-[#1d2070]" />
              <Tools items={[["oneT", "Escala do texto"]]} />
              <ToolSelect label="Tipo de texto" value="Texto fixo" width="w-[172px]" />
              <span className="w-1" />
              <ToolSelect label="Altura do texto" value="2.5 mm" width="w-[50px]" indent="pl-[3px]" />
              <FontTool label="Estilo" className="ml-0.5 text-[13px] text-[#1d2070]" />
              <Sep />
              <Tools items={[["left", "Alinhar à esquerda", "on"], ["center", "Centralizar"], ["right", "Alinhar à direita"]]} />
              <Sep />
              <Tools items={[["Text", "Texto", "on"], ["Typ", "Tipo"], ["Num", "Número"]]} />
            </Bar>
            <Bar>
              <Tools items={[["slot", "Slot", "on"], ["yarea", "Área", "on"], ["hatch", "Hachura"]]} />
              <Sep />
              <Tools items={[["w1", "Frontal"], ["w2", "Superior"], ["w3", "Inferior"], ["w4", "Esquerda"], ["w5", "Direita"]]} />
              <Sep />
              <Tools items={[["book", "Modelo 3D"]]} />
            </Bar>
            <Bar>
              <Tools items={[["rsq", "Contorno"], ["rsqx", "Área restrita"], ["target", "Origem"], ["win", "Janela"], ["rows", "Lista"], ["gsq", "Região"], ["gsqx", "Preenchimento"], ["pct", "Proporção"]]} />
            </Bar>
            <Bar>
              <Tools items={[["r1", "Cota 1"], ["r2", "Cota 2"], ["r3", "Cota 3"], ["r4", "Cota 4"], ["r2", "Cota 5", "off"], ["r3", "Cota 6", "off"]]} />
            </Bar>
          </div>
          <div className="flex gap-0.5">
            <Bar>
              <Tools items={[["node", "Nó"], ["nodes", "Nós"]]} />
              <span className="ml-0.5 flex h-4 w-3.5 items-center bg-white pl-0.5">
                <Icon name="nodeflag" size="sm" />
              </span>
              <ToolSelect label="Tipo de nó" value="Node - all directions" width="w-[157px]" indent="pl-0" />
              <Tools items={[["onePin", "Escala do nó"]]} />
              <Sep />
              <Tools items={[["group", "Agrupar"], ["ungroup", "Desagrupar"], ["net", "Rede"]]} />
            </Bar>
            <Bar>
              <Mil label="Destaque 1" d="M6 6h0" />
              <Mil label="Destaque 2" d="M1 3h6M4 2h7v2H4z" />
              <Mil label="Destaque 3" d="M1 1l3 2-3 2M3 3h8" />
              <Mil label="Destaque 4" d="M2 3h8M6 0v6M4 1.500h4v3H4z" />
              <Sep />
              <Tools items={[["pinl", "Pino à esquerda"], ["pinr", "Pino à direita"]]} />
            </Bar>
          </div>
        </div>

        <div className="flex min-h-0 flex-1">
          <aside className="flex w-[239px] shrink-0 flex-col">
            <section className="flex min-h-0 flex-1 flex-col">
              <PanelHeader title="Editor de Banco de Dados" />
              <div className={`flex min-h-0 flex-1 flex-col bg-white ${ui}`}>
                <div className="flex h-[15px] shrink-0 text-[9px] leading-[15px]">
                  <span className="w-[180px] border-r border-[#b9b9bd] pl-[3px]">Componente / Símbolo</span>
                  <span className="pl-1">Coluna Info</span>
                </div>
                <div role="tree" className="grid h-[152px] shrink-0 auto-rows-fr border-b border-[#b9b9bd]">
                  {database.map((r, i) => (
                    <TreeRow key={i} row={r} split="w-[180px]" />
                  ))}
                </div>
                <div className="mt-auto flex h-3 bg-[#f0eef1]">
                  <Arrow dir="left" label="Rolar à esquerda" />
                  <span className="mr-[41px] flex-1 bg-[#cccace]" />
                  <Arrow dir="right" label="Rolar à direita" />
                </div>
              </div>
            </section>
            <section className="mt-[3px] flex h-[252px] shrink-0 flex-col">
              <PanelHeader title="Modelo" />
              <div className={`flex min-h-0 flex-1 flex-col border-2 border-[#f5bfc9] bg-[#f0eef3] ${ui}`}>
                <div className="flex flex-col gap-[3px] pt-2 pr-[17px] pb-[9px] pl-[7px]">
                  <Filter id="entry" label="Entry" />
                  <Filter id="mcad" label="Nome de Modelo M-CAD" />
                  <button type="button" className="mt-0.5 h-3.5 w-[86px] self-end border-2 border-[#2a82d6] bg-[#e6e6ec] text-[9px] leading-[10px]">Limpar Busca</button>
                </div>
                <div className="flex min-h-0 flex-1 bg-white">
                  <div className="min-w-0 flex-1">
                    <div className="flex h-[15px] text-[9px] leading-[15px]">
                      <span className="w-[168px] shrink-0 border-r border-[#dddde2] pl-1">Modelo</span>
                      <span className="pl-[3px]">Característica</span>
                    </div>
                    <div role="tree" className="grid h-[114px] auto-rows-fr">
                      {library.map((r, i) => (
                        <TreeRow key={i} row={r} split="w-[168px]" />
                      ))}
                    </div>
                  </div>
                  <div className="flex w-3 shrink-0 flex-col bg-[#f0eef1]">
                    <Arrow dir="up" label="Rolar para cima" />
                    <span className="mb-[26px] flex-1 bg-[#cccace]" />
                    <Arrow dir="down" label="Rolar para baixo" />
                  </div>
                </div>
                <div className="flex h-3 shrink-0 bg-[#f0eef1] pr-3">
                  <Arrow dir="left" label="Rolar à esquerda" />
                  <span className="mr-[90px] flex-1 bg-[#cccace]" />
                  <Arrow dir="right" label="Rolar à direita" />
                </div>
              </div>
              <div role="tablist" className="flex h-[18px] shrink-0 gap-0.5 px-0.5 pb-px">
                {panelTabs.map((t) => (
                  <button key={t.text} role="tab" type="button" className={`flex flex-auto items-center gap-0.5 px-0.5 whitespace-nowrap ${t.look}`}>
                    <Icon name={t.icon} size="sm" />
                    {t.text}
                  </button>
                ))}
              </div>
            </section>
          </aside>

          <main className="ml-1 flex min-w-0 flex-1 flex-col border-l border-[#8f96ad] bg-white">
            <div className="flex min-h-0 flex-1">
              <div className="relative min-w-0 flex-1 overflow-hidden">
                <svg viewBox="0 0 694 202" className="absolute top-[130px] left-[178px] h-[202px] w-[694px]" aria-label="Modelo CHAPA_SUPERIOR">
                  <path d="M3.500 1.500h689v195H3.500z" fill="#a09da5" stroke="#59394a" />
                  <circle cx="2.500" cy="196.500" r="1.800" fill="#777" stroke="#222" />
                </svg>
              </div>
              <div className="flex w-[15px] flex-col items-center bg-[#f0eef1] pt-0.5 pr-px">
                <Arrow dir="up" label="Rolar para cima" />
                <div className="flex w-full flex-1 flex-col justify-end px-px pb-[46px]">
                  <span className="h-24 bg-[#cccace]" />
                </div>
                <Arrow dir="down" label="Rolar para baixo" />
              </div>
            </div>
            <div className="flex h-[13px] shrink-0 items-center bg-[#f0eef1] pr-4 pl-0.5">
              <Arrow dir="left" label="Rolar à esquerda" />
              <div className="grid h-3 flex-1 grid-cols-[200fr_308fr_470fr]">
                <span className="col-start-2 bg-[#cccace]" />
              </div>
              <Arrow dir="right" label="Rolar à direita" />
            </div>
          </main>
        </div>

        <div className="mt-1 flex h-[55px] shrink-0 gap-1.5">
          <section className="flex flex-1 flex-col">
            <PanelHeader title="Mensagens" />
            <div className="flex flex-1 justify-end border-b border-[#a9c0e6] bg-white pr-[3px]">
              <div className="flex flex-col justify-center bg-[#f0eef1]">
                <button type="button" aria-label="Subir" className="flex size-2 items-center">
                  <svg viewBox="0 0 8 8" fill="none" stroke="#45454c" strokeWidth="1.600" aria-hidden="true"><path d={chevrons.up} /></svg>
                </button>
                <button type="button" aria-label="Descer" className="flex size-2 items-center">
                  <svg viewBox="0 0 8 8" fill="none" stroke="#45454c" strokeWidth="1.600" aria-hidden="true"><path d={chevrons.down} /></svg>
                </button>
              </div>
            </div>
            <div role="tablist" className="flex h-[18px] gap-0.5 bg-linear-to-b from-[#dfeafc] to-[#c2d9fd] px-0.5 pb-0.5">
              <button type="button" role="tab" className="flex items-center gap-[3px] bg-[#dbe8fb] pr-0.5 pl-0.5">
                <Icon name="msgs" size="sm" />
                Mensagens
              </button>
              <button type="button" role="tab" className="flex items-center gap-[3px] bg-[#ffe68a] pr-1 pl-[3px]">
                <Icon name="results" size="sm" />
                Resultados
              </button>
            </div>
          </section>
          <section className="flex w-[312px] flex-col">
            <PanelHeader title="Pré-visualização" />
            <div className="flex flex-1 bg-white">
              <div className="flex w-[50px] items-end justify-center bg-[#f0eef1] pr-3.5 pb-1">
                <svg viewBox="0 0 16 7" className="h-[7px] w-4" fill="#9a9299" stroke="#222" aria-hidden="true">
                  <path d="M.5.5h15v6H.5z" />
                  <path d="M3 2.500h10v2H3z" stroke="#5a444e" />
                </svg>
              </div>
            </div>
          </section>
        </div>

        <div className="mt-px flex h-[21px] shrink-0">
          <Bar>
            <Tools items={[["line", "Linha"], ["poly", "Polígono"], ["rect", "Retângulo"], ["curve", "Curva"], ["circle", "Círculo"], ["arc", "Arco"], ["arc3", "Arco por 3 pontos"], ["conn", "Conexão"]]} />
            <Sep />
            <Tools items={[["pen", "Cor da linha"]]} />
            <span className="flex w-3 items-center justify-center">
              <Tri />
            </span>
            <input aria-label="Espessura da linha" defaultValue="0.1 mm" className="h-4 w-[39px] bg-white pl-[3px] leading-4 outline-none" />
            <span className="ml-px flex w-2.5 flex-col items-center gap-[3px]">
              <span className="rotate-180"><Tri /></span>
              <Tri />
            </span>
            <button type="button" aria-label="Estilo da linha" className="ml-1 flex h-4 w-[92px] items-center bg-white">
              <span className="mx-[5px] h-px flex-1 bg-[#23242c]" />
              <span className="flex h-4 w-[11px] items-center justify-center bg-[#dbe7fa]">
                <Tri />
              </span>
            </button>
            <span className="w-[3px]" />
            <Sep />
            <Tools items={[["group", "Agrupar"], ["ungroup", "Desagrupar"], ["combine", "Combinar"]]} />
            <Sep />
            <Tools items={[["l1", "Trazer para frente"], ["l2", "Avançar"], ["l3", "Enviar para trás"], ["l4", "Recuar"], ["del", "Excluir"], ["hand", "Mover"]]} />
          </Bar>
        </div>
        <footer className="flex h-4 shrink-0 items-center border-t border-[#8fb0e2] bg-linear-to-b from-[#d6e4fd] to-[#b4cdf8] pl-1 text-[#2d5ba8]">
          <span className="flex-1">Pronto</span>
          <span className="w-[77px] border-l border-[#a7c0ea] bg-[#c5d8f8] pl-[3px]">22.13,323.264</span>
          <span className="w-6 border-l border-[#a7c0ea] bg-[#c5d8f8] text-center">MM</span>
          <span className="w-[22px] border-l border-[#a7c0ea] bg-[#c5d8f8] text-center">CAP</span>
          <span className="w-6 border-l border-[#a7c0ea] bg-[#c5d8f8] text-center">NUM</span>
          <span className="w-[25px] border-l border-[#a7c0ea] bg-[#c5d8f8] text-center text-[#98a8c4]">SCRL</span>
        </footer>
      </div>
      <SlotDialog />
    </div>
  );
}
